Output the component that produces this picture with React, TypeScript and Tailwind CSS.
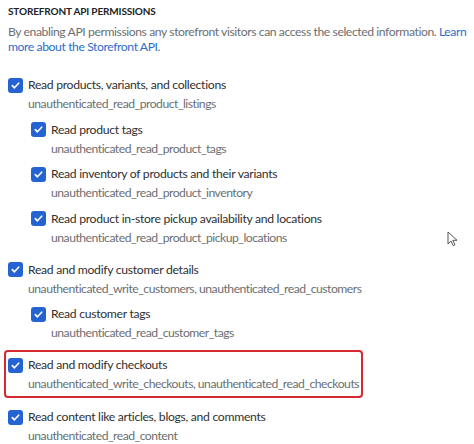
import React from "react";

const Check = () => (
  <span className="flex h-[15px] w-[15px] shrink-0 items-center justify-center rounded-[3px] bg-[#2463d1]">
    <svg width="11" height="11" viewBox="0 0 12 12" fill="none">
      <path d="M2.5 6.2l2.3 2.3 4.7-5" stroke="white" strokeWidth="1.8" strokeLinecap="round" strokeLinejoin="round" />
    </svg>
  </span>
);

const Item = ({ label, sub }: { label: string; sub: string }) => (
  <div className="flex flex-col whitespace-nowrap">
    <div className="flex h-[18px] items-center gap-[5px]">
      <Check />
      <span className="text-[#303030]">{label}</span>
    </div>
    <div className="ml-[20px] h-[20.5px] leading-[20px] tracking-[-0.5px] text-[#6b6f73]">{sub}</div>
  </div>
);

export default function App() {
  return (
    <div
      className="relative h-[444px] w-[474px] overflow-hidden bg-white text-[12.2px] leading-[18px] tracking-[-0.3px]"
      style={{ fontFamily: 'Lato, "Open Sans", sans-serif' }}
    >
      <div className="px-[8px] pt-[2px]">
        <div className="h-[18px] text-[10px] font-bold leading-[18px] tracking-[-0.15px] text-[#202223]">
          STOREFRONT API PERMISSIONS
        </div>
        <p className="mt-[4px] whitespace-nowrap leading-[15px] tracking-[-0.42px] text-[#6b6f73]">
          By enabling API permissions any storefront visitors can access the selected information.{" "}
          <span className="text-[#2c6ecb]">Learn</span>
          <br />
          <span className="text-[#2c6ecb]">more about the Storefront API</span>.
        </p>
        <div className="mt-[22px] flex flex-col">
          <div className="flex flex-col gap-[6px]">
            <Item label="Read products, variants, and collections" sub="unauthenticated_read_product_listings" />
            <div className="ml-[23px] flex flex-col gap-[6px]">
              <Item label="Read product tags" sub="unauthenticated_read_product_tags" />
              <Item label="Read inventory of products and their variants" sub="unauthenticated_read_product_inventory" />
              <Item label="Read product in-store pickup availability and locations" sub="unauthenticated_read_product_pickup_locations" />
            </div>
          </div>
          <div className="mt-[12.5px] flex flex-col gap-[6px]">
            <Item label="Read and modify customer details" sub="unauthenticated_write_customers, unauthenticated_read_customers" />
            <div className="ml-[23px]">
              <Item label="Read customer tags" sub="unauthenticated_read_customer_tags" />
            </div>
          </div>
          <div className="mt-[6.5px] -ml-[4px] w-[359px] rounded-[4px] border-2 border-[#d7282f] pl-[2px] pt-[4px] pb-[1.5px]">
            <Item label="Read and modify checkouts" sub="unauthenticated_write_checkouts, unauthenticated_read_checkouts" />
          </div>
          <div className="mt-[10px]">
            <Item label="Read content like articles, blogs, and comments" sub="unauthenticated_read_content" />
          </div>
        </div>
      </div>
      <svg className="absolute left-[447px] top-[231px]" width="12" height="16" viewBox="0 0 12 16" fill="white">
        <path d="M1 1v12l3-3 2.2 4.6 1.8-.8L5.8 9.3H10z" stroke="#555" strokeWidth="1" strokeLinejoin="round" />
      </svg>
    </div>
  );
}
